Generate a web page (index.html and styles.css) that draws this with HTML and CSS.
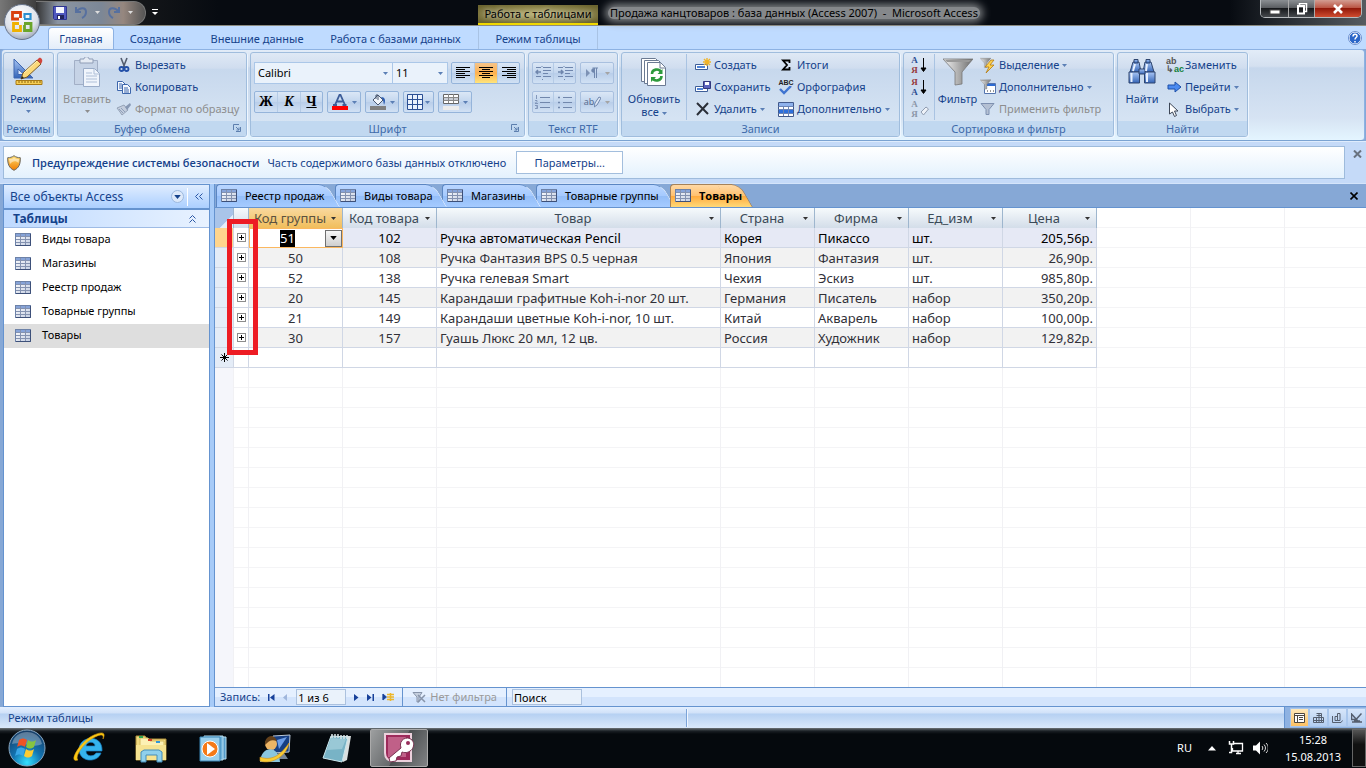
FILE: index.html
```html
<!DOCTYPE html>
<html lang="ru">
<head>
<meta charset="utf-8">
<title>Продажа канцтоваров : база данных (Access 2007) - Microsoft Access</title>
<link rel="stylesheet" href="styles.css">
</head>
<body>

<!-- shared icons -->
<svg class="defs" width="0" height="0">
  <defs>
    <linearGradient id="gBlue" x1="0" y1="0" x2="0" y2="1"><stop offset="0" stop-color="#a9c6f5"/><stop offset="1" stop-color="#3465b8"/></linearGradient>
    <linearGradient id="gGray" x1="0" y1="0" x2="1" y2="0"><stop offset="0" stop-color="#f4f4f4"/><stop offset="1" stop-color="#6c6c6c"/></linearGradient>
    <linearGradient id="gGold" x1="0" y1="0" x2="0" y2="1"><stop offset="0" stop-color="#ffe070"/><stop offset="1" stop-color="#ee7a00"/></linearGradient>
    <linearGradient id="gCells" x1="0" y1="0" x2="1" y2="1"><stop offset="0" stop-color="#fff"/><stop offset="1" stop-color="#c2cce0"/></linearGradient>
    <radialGradient id="gOrb" cx=".5" cy=".9" r=".9"><stop offset="0" stop-color="#35e0ff"/><stop offset=".45" stop-color="#1273b0"/><stop offset="1" stop-color="#173a63"/></radialGradient>
    <radialGradient id="gOffice" cx=".45" cy=".3" r=".8"><stop offset="0" stop-color="#fff"/><stop offset=".6" stop-color="#dde2ea"/><stop offset="1" stop-color="#8892a5"/></radialGradient>
  </defs>
  <symbol id="table" viewBox="0 0 16 13">
    <rect x=".5" y=".5" width="15" height="12" fill="url(#gCells)" stroke="#6d82a8"/>
    <rect x="1" y="1" width="14" height="2" fill="#86a3d8"/>
    <path d="M1 3.500h14M1 6.500h14M1 9.500h14M5.500 1v11M10.500 1v11" stroke="#8492b0"/>
    <path d="M15.500 1v11.500H1" fill="none" stroke="#3d5079"/>
  </symbol>
  <symbol id="caret" viewBox="0 0 5 3"><path d="M0 0h5L2.500 3z" fill="currentColor"/></symbol>
  <symbol id="plus" viewBox="0 0 9 9"><rect x=".5" y=".5" width="8" height="8" fill="#fff" stroke="#8c8c8c"/><path d="M2 4.500h5M4.500 2v5" stroke="#000"/></symbol>
  <symbol id="launch" viewBox="0 0 8 8"><path d="M.5 6V.5H6M7.500 3v4.500H3M3 3l3 3M6 3.500V6H3.500" fill="none" stroke="#5d7fae"/></symbol>
  <symbol id="funnel" viewBox="0 0 30 28"><path d="M0 1h30L19 14v12l-7 1V14z" fill="url(#gGray)" stroke="#777" stroke-width=".8"/><path d="M2 2h26l-2 2H4z" fill="#999"/></symbol>
</svg>

<header class="titlebar">
  <button class="office" aria-label="Office">
    <svg width="36" height="36" viewBox="0 0 36 36">
      <circle cx="18" cy="18" r="17.500" fill="url(#gOffice)" stroke="#66738a"/>
      <g fill="none" stroke-width="2.800">
        <path d="M15 15H8.500V8.500h8V14" stroke="#d9400f"/>
        <path d="M20 15h6.500v-5H20.500V14" stroke="#2b8fd0" stroke-width="2.200"/>
        <path d="M15 19.500H9.500v7h7V21" stroke="#efb100"/>
        <path d="M20 19.500h7v7h-6.500V21" stroke="#6aa52a"/>
      </g>
    </svg>
  </button>
  <div class="quick">
    <button aria-label="Сохранить файл"><svg width="14" height="14" viewBox="0 0 14 14"><path d="M.5.5h13v13h-12l-1-1z" fill="#5058c0" stroke="#2e3590"/><path d="M3 1h8v6H3z" fill="#f4f6ff"/><path d="M4 9h7v4H4z" fill="#23245c"/><path d="M5 10h2v3H5z" fill="#fff"/></svg></button>
    <button class="dim" aria-label="Отменить"><svg width="14" height="13" viewBox="0 0 14 13"><path d="M2 1v5h5M2.500 5.500C6 1 12 1 12 6c0 3-2 5-4 6" fill="none" stroke="#57709f" stroke-width="2"/></svg></button>
    <svg class="caret pale"><use href="#caret"/></svg>
    <button class="dim" aria-label="Вернуть"><svg width="14" height="13" viewBox="0 0 14 13"><path d="M12 1v5H7M11.500 5.500C8 1 2 1 2 6c0 3 2 5 4 6" fill="none" stroke="#57709f" stroke-width="2"/></svg></button>
    <svg class="caret pale"><use href="#caret"/></svg>
  </div>
  <svg class="more" width="6" height="7" viewBox="0 0 6 7"><path d="M0 .5h6" stroke="#fff"/><path d="M0 3h6L3 6z" fill="#fff"/></svg>
  <div class="context">Работа с таблицами</div>
  <h1>Продажа канцтоваров : база данных (Access 2007) &nbsp;- &nbsp;Microsoft Access</h1>
  <div class="winbtns">
    <button class="min" aria-label="Свернуть"><svg width="12" height="12"><rect x="1" y="7" width="10" height="4" fill="#fff" stroke="#444"/></svg></button>
    <button class="max" aria-label="Развернуть"><svg width="12" height="12" fill="none" stroke="#fff"><path d="M3.500 2V.5h7v8H9" stroke-width="1.500"/><rect x="2" y="3" width="6" height="7.500" stroke-width="2"/></svg></button>
    <button class="close" aria-label="Закрыть"><svg width="12" height="12"><path d="M2 2l8 8M10 2l-8 8" stroke="#fff" stroke-width="2.600"/></svg></button>
  </div>
</header>

<nav class="tabs">
  <a class="on" href="#">Главная</a>
  <a class="t2" href="#">Создание</a>
  <a class="t3" href="#">Внешние данные</a>
  <a class="t4" href="#">Работа с базами данных</a>
  <a class="t5" href="#">Режим таблицы</a>
  <button class="help" aria-label="Справка"><svg width="14" height="14" viewBox="0 0 14 14"><circle cx="7" cy="7" r="6" fill="#2b66c8" stroke="#fff"/><circle cx="7" cy="7" r="6.500" fill="none" stroke="#6b8fcf"/><path d="M5 5.500c0-3 4-3 4-.5C9 6.500 7 6.500 7 8.500M7 10v1.500" fill="none" stroke="#fff" stroke-width="1.500"/></svg></button>
</nav>

<section class="ribbon">
  <div class="group g-mode">
    <div class="body">
      <button class="big">
        <svg width="32" height="30" viewBox="0 0 32 30">
          <path d="M2 2v19h19z" fill="url(#gBlue)" stroke="#3e66b0"/><path d="M6 12v5.500h6z" fill="#dce8fa" stroke="#3e66b0"/>
          <path d="M4 23.500h26v4H4z" fill="#f7cf55" stroke="#a87a15"/><path d="M7 24v2M10 24v2M13 24v2M16 24v2M19 24v2M22 24v2M25 24v2M28 24v2" stroke="#8b6411"/>
          <path d="M9 22l2-6L25 3l4 4-14 13z" fill="#fbd979" stroke="#7b5b23"/><path d="M25 3l2-2c2-1 4 2 3 4l-1 2z" fill="#d2453c"/><path d="M12 16l13-12" stroke="#fff2c0"/><path d="M9 22l1-3 2 2z" fill="#222"/>
        </svg>
        <span>Режим</span><svg class="caret"><use href="#caret"/></svg>
      </button>
    </div>
    <div class="caption">Режимы</div>
  </div>

  <div class="group g-clip">
    <div class="body">
      <button class="big off" disabled>
        <svg width="28" height="30" viewBox="0 0 28 30">
          <path d="M1.500 3.500h23v24h-23z" fill="#c6d3e6" stroke="#a2afc6"/><path d="M7 2h4c0-3 5-3 5 0h4v4H7z" fill="#e5ebf4" stroke="#8f9db6"/>
          <path d="M10.500 11.500h11l5 5v13h-16z" fill="#f0f5fc" stroke="#9aacc8"/><path d="M21 12v5h5M13 16h6M13 19h11M13 22h11M13 25h11" stroke="#aebfd8" fill="none"/>
        </svg>
        <span>Вставить</span><svg class="caret"><use href="#caret"/></svg>
      </button>
      <div class="col">
        <button><svg width="16" height="16" viewBox="0 0 16 16"><path d="M5 1l4 10M11 1L7 11" stroke="#555e70" stroke-width="1.600"/><circle cx="5.500" cy="12" r="2" fill="none" stroke="#2350a8" stroke-width="1.800"/><circle cx="10.500" cy="12" r="2" fill="none" stroke="#2350a8" stroke-width="1.800"/></svg>Вырезать</button>
        <button><svg width="16" height="16" viewBox="0 0 16 16"><g fill="#f5f9ff" stroke="#3c66ac"><path d="M1.500 2.500h5l3 3v6h-8z"/><path d="M6.500 5.500h5l3 3v6h-8z"/></g><path d="M3 5h3M3 7h3M3 9h3M8 9h4M8 11h5M8 13h5" stroke="#3c66ac"/></svg>Копировать</button>
        <button class="off" disabled><svg width="16" height="16" viewBox="0 0 16 16"><path d="M1 7l7-3 4 5-6 5-2-3z" fill="#c3cddd" stroke="#95a3b8"/><path d="M9 6l5-4 1 2-4 5z" fill="#8798b4"/><path d="M3 8l4 4M5 7l4 4" stroke="#8fa0ba"/></svg>Формат по образцу</button>
      </div>
    </div>
    <div class="caption">Буфер обмена<svg class="launch"><use href="#launch"/></svg></div>
  </div>

  <div class="group g-font">
    <div class="body rows">
      <div class="line">
        <div class="combos">
          <select class="fname" aria-label="Шрифт"><option>Calibri</option></select><select class="fsize" aria-label="Размер"><option>11</option></select>
        </div>
        <div class="set wide">
          <button aria-label="По левому краю"><svg width="16" height="12" stroke="#000"><path d="M1 .5h14M1 2.500h9M1 4.500h14M1 6.500h9M1 8.500h14M1 10.500h9"/></svg></button>
          <button class="hot" aria-label="По центру"><svg width="16" height="12" stroke="#000"><path d="M1 .5h14M4 2.500h8M1 4.500h14M4 6.500h8M1 8.500h14M4 10.500h8"/></svg></button>
          <button aria-label="По правому краю"><svg width="16" height="12" stroke="#000"><path d="M1 .5h14M6 2.500h9M1 4.500h14M6 6.500h9M1 8.500h14M6 10.500h9"/></svg></button>
        </div>
      </div>
      <div class="line">
        <div class="set wide letters"><button><b>Ж</b></button><button><i>К</i></button><button><u>Ч</u></button></div>
        <div class="set drop"><button aria-label="Цвет шрифта"><svg width="16" height="16" viewBox="0 0 16 16"><path d="M3 11L7.500 1h1L13 11M5 7.500h6M1 11h4M10.500 11h4" fill="none" stroke="#3c5c98" stroke-width="1.800"/><path d="M0 12h16v4H0z" fill="#f00"/></svg><svg class="caret"><use href="#caret"/></svg></button></div>
        <div class="set drop"><button aria-label="Заливка"><svg width="16" height="16" viewBox="0 0 16 16"><path d="M3 6l5-5 5 5-5 5z" fill="#f2f6fc" stroke="#49566f"/><path d="M6 5V1h2v5" fill="none" stroke="#49566f"/><path d="M11 3c4 0 5 3 3 8l-1-5z" fill="#2d5db0"/><path d="M0 12h16v4H0z" fill="#808080"/></svg><svg class="caret"><use href="#caret"/></svg></button></div>
        <div class="set drop narrow"><button aria-label="Сетка"><svg width="16" height="16" fill="#eaf2fd" stroke="#2b4f94"><path d="M.5.5h15v15H.5zM5.500 0v16M10.500 0v16M0 5.500h16M0 10.500h16"/></svg><svg class="caret"><use href="#caret"/></svg></button></div>
        <div class="set drop"><button aria-label="Чередование строк"><svg width="16" height="16"><path d="M.5.500h15v9H.5z" fill="#fff" stroke="#666"/><path d="M1 3h14v3H1z" fill="#c8ccd4"/><path d="M.5 3.500h15M.5 6.500h15M5.500 0v9M10.500 0v9" stroke="#888"/><path d="M0 12h16v4H0z" fill="#ececec"/></svg><svg class="caret"><use href="#caret"/></svg></button></div>
      </div>
    </div>
    <div class="caption">Шрифт<svg class="launch"><use href="#launch"/></svg></div>
  </div>

  <div class="group g-rtf">
    <div class="body rows">
      <div class="line">
        <div class="set gray"><button disabled aria-label="Уменьшить отступ"><svg width="16" height="14" stroke="#6f86ad"><path d="M1 1.500h5M8 1.500h8M8 4.500h8M8 7.500h5M1 10.500h5M8 10.500h8M7 13.500h1M7 0v1"/><path d="M1 6h5M3 4L1 6l2 2" fill="none" stroke-width="1.500"/></svg></button><button disabled aria-label="Увеличить отступ"><svg width="16" height="14" stroke="#6f86ad"><path d="M1 1.500h5M8 1.500h8M8 4.500h8M8 7.500h5M1 10.500h5M8 10.500h8M7 13.500h1M7 0v1"/><path d="M1 6h5M4 4l2 2-2 2" fill="none" stroke-width="1.500"/></svg></button></div>
        <div class="set drop gray"><button disabled aria-label="Направление текста"><svg width="16" height="12"><path d="M1 2l4 4-4 4z" fill="#7d92b5"/><path d="M9.500 1v10M11.500 1v10M7.500 1H13" stroke="#6f86ad"/><path d="M10 1C5 1 5 6 10 6z" fill="#6f86ad"/></svg><svg class="caret"><use href="#caret"/></svg></button></div>
      </div>
      <div class="line">
        <div class="set gray"><button disabled aria-label="Нумерация"><svg width="16" height="15" stroke="#7187ac"><path d="M5 2.500h10M5 7.500h10M5 12.500h10"/><path d="M1.500 0v4M0 5.500h2v1L0 8.500h3M0 10.500h2.500v3H0M1 12h1" fill="none" stroke-width=".8"/></svg></button><button disabled aria-label="Маркеры"><svg width="16" height="15" stroke="#7187ac"><path d="M6 2.500h9M6 7.500h9M6 12.500h9M1 2.500h2M1 7.500h2M1 12.500h2"/><path d="M2 1.500v2M2 6.500v2M2 11.500v2"/></svg></button></div>
        <div class="set drop gray"><button disabled aria-label="Выделение цветом"><span class="ab">ab</span><svg width="7" height="12" viewBox="0 0 7 12"><path d="M0 11l1-4 4-6 2 1-4 7z" fill="#dfe8f5" stroke="#6f86ad"/></svg><svg class="caret"><use href="#caret"/></svg></button></div>
      </div>
    </div>
    <div class="caption">Текст RTF</div>
  </div>

  <div class="group g-rec">
    <div class="body">
      <button class="big sep">
        <svg width="26" height="30" viewBox="0 0 26 30"><g fill="#fff" stroke="#6b7a92"><path d="M.5 1.500h14l3 3v20H.5z"/><path d="M3.500 3.500h14l3 3v20h-17z"/><path d="M6.500 5.500h13l5 5v18h-18z"/></g><path d="M19 6v5h5" fill="none" stroke="#6b7a92"/><path d="M11 17c0-5 7-6 9-2M20.500 19c0 5-7 6-9 2" fill="none" stroke="#2d9a3c" stroke-width="2.600"/><path d="M21.500 12v5h-5zM10 25v-5h5z" fill="#2d9a3c"/></svg>
        <span>Обновить<br>все <svg class="caret"><use href="#caret"/></svg></span>
      </button>
      <div class="col">
        <button><svg width="16" height="14" viewBox="0 0 16 14"><path d="M.5 6.500h12v5H.5z" fill="#fff" stroke="#3e5e98"/><path d="M2 8h8v2H2z" fill="#4f83d8"/><path d="M12 0v8M8 4h8M9 1l6 6M15 1L9 7" stroke="#f1b429" stroke-width="1.400"/></svg>Создать</button>
        <button><svg width="16" height="14" viewBox="0 0 16 14"><path d="M.5 6.500h12v5H.5z" fill="#fff" stroke="#3e5e98"/><path d="M2 8h6v2H2z" fill="#4f83d8"/><path d="M8.500 1.500h7v7h-7z" fill="#5b63bd" stroke="#31377d"/><path d="M10 2h4v3h-4z" fill="#fff"/></svg>Сохранить</button>
        <button><svg width="16" height="14" viewBox="0 0 16 14"><path d="M2 1l11 11M13 1L2 13" stroke="#2b2f38" stroke-width="2"/></svg>Удалить<svg class="caret"><use href="#caret"/></svg></button>
      </div>
      <div class="col col2">
        <button><svg width="16" height="14" viewBox="0 0 16 14"><path d="M11.500 5V2.500H5L9 7l-4 4.500h6.500V9" fill="none" stroke="#000" stroke-width="1.800"/></svg>Итоги</button>
        <button><span class="abc">ABC<svg width="14" height="9" viewBox="0 0 14 9"><path d="M2 3l4 4 7-7" fill="none" stroke="#3f74d0" stroke-width="2.400"/></svg></span>Орфография</button>
        <button><svg width="16" height="15" viewBox="0 0 16 15"><path d="M.5.500h15v14H.5z" fill="#fff" stroke="#41598c"/><path d="M1 1h14v3H1z" fill="#8fb2ec"/><path d="M1 7h14v4H1z" fill="#2c6fdd"/><path d="M.5 4.500h15M.5 7.500h15M.5 11.500h15M5.500 4v10M10.500 4v10" stroke="#6b84b5"/></svg>Дополнительно<svg class="caret"><use href="#caret"/></svg></button>
      </div>
    </div>
    <div class="caption">Записи</div>
  </div>

  <div class="group g-sort">
    <div class="body">
      <div class="col sorts">
        <button aria-label="По возрастанию"><span class="az"><b>А</b><em>Я</em></span><svg width="7" height="16"><path d="M3.500 1v13M1 11l2.500 3.500L6 11z" stroke="#000"/></svg></button>
        <button aria-label="По убыванию"><span class="az"><em>Я</em><b>А</b></span><svg width="7" height="16"><path d="M3.500 1v13M1 11l2.500 3.500L6 11z" stroke="#000"/></svg></button>
        <button class="off" disabled aria-label="Очистить сортировку"><span class="az"><b>А</b><em>Я</em></span><svg width="9" height="16"><path d="M1 11l5-5 2.500 2-5 6z" fill="#eef2f8" stroke="#909cb0"/></svg></button>
      </div>
      <button class="big">
        <svg width="30" height="30" viewBox="0 -1 30 30"><use href="#funnel" width="30" height="28"/></svg>
        <span>Фильтр</span>
      </button>
      <div class="col">
        <button><svg width="16" height="16" viewBox="0 0 16 16"><use href="#funnel" width="11" height="12"/><path d="M11 3L5 10h4l-3 6 8-8h-4l4-5z" fill="#ffd34d" stroke="#b27812" stroke-width=".8"/></svg>Выделение<svg class="caret"><use href="#caret"/></svg></button>
        <button><svg width="16" height="16" viewBox="0 0 16 16"><path d="M4.500 4.500h11v10h-11z" fill="#fff" stroke="#5474ae"/><path d="M5 5h10v2H5z" fill="#2d6bd2"/><use href="#funnel" width="11" height="11"/><path d="M7 12h1M10 12h1M13 12h1" stroke="#333"/></svg>Дополнительно<svg class="caret"><use href="#caret"/></svg></button>
        <button class="off" disabled><svg width="16" height="14" viewBox="0 0 16 14"><path d="M1 1.500h13L9 7.500v5H6v-5z" fill="#b4c0d3" stroke="#7e90b0"/></svg>Применить фильтр</button>
      </div>
    </div>
    <div class="caption">Сортировка и фильтр</div>
  </div>

  <div class="group g-find">
    <div class="body">
      <button class="big">
        <svg width="28" height="30" viewBox="0 -1 28 30"><g fill="url(#gBlue)" stroke="#2e456f"><path d="M5 4h6l2 10H2zM17 4h6l3 10H15z"/><path d="M6 1.500h4V5H6zM18 1.500h4V5h-4z"/><path d="M1 14h10.500v11H1zM16.500 14H27v11H16.500z"/><path d="M11 11h6v5h-6z"/></g><path d="M3.500 15v9M19 15v9M7 6l-2 7M19 6l-1 7" stroke="#e8f1ff" stroke-width="2"/></svg>
        <span>Найти</span>
      </button>
      <div class="col">
        <button><span class="repl">ab<br>↳<b>ac</b></span>Заменить</button>
        <button><svg width="16" height="12" viewBox="0 0 16 12"><path d="M2 4h7V1l6 5-6 5V8H2z" fill="#4a8af0" stroke="#1d4fa8"/></svg>Перейти<svg class="caret"><use href="#caret"/></svg></button>
        <button><svg width="16" height="15" viewBox="0 0 16 15"><path d="M3.500 1v11l3-2 2 4.500 2-1-2-4.500h3.500z" fill="#fff" stroke="#3c4656"/></svg>Выбрать<svg class="caret"><use href="#caret"/></svg></button>
      </div>
    </div>
    <div class="caption">Найти</div>
  </div>
</section>

<section class="message">
  <div class="msgbox">
    <svg width="14" height="16" viewBox="0 0 14 16"><path d="M7 .7c2 1.500 4 2 6.300 2C13.500 9 12 13 7 15.300 2 13 .5 9 .7 2.700 3 2.700 5 2.200 7 .7z" fill="url(#gGold)" stroke="#6e6a62"/><path d="M2 4c2 0 4-.5 5-1.500C8 3.500 10 4 12 4l-.5 4C9 5 5 6 3 9z" fill="#fff" opacity=".5"/></svg>
    <b>Предупреждение системы безопасности</b>
    <span>Часть содержимого базы данных отключено</span>
    <button>Параметры...</button>
  </div>
  <button class="x" aria-label="Закрыть панель"><svg width="9" height="8"><path d="M1 .500l7 7M8 .500l-7 7" stroke="#69727f" stroke-width="2"/></svg></button>
</section>

<main class="work">
  <aside class="objects">
    <div class="objhead"><span>Все объекты Access</span><button class="round" aria-label="Меню"><svg width="7" height="4" viewBox="0 0 5 3"><use href="#caret"/></svg></button><button class="fold" aria-label="Скрыть"><svg width="8" height="7" fill="none" stroke="#2b57a5"><path d="M3.500.5l-3 3 3 3M7.500.5l-3 3 3 3"/></svg></button></div>
    <div class="objgroup"><span>Таблицы</span><svg width="7" height="8" fill="none" stroke="#2b57a5"><path d="M.5 3.500l3-3 3 3M.5 7.500l3-3 3 3"/></svg></div>
    <ul>
      <li><a href="#"><svg class="tbl"><use href="#table"/></svg>Виды товара</a></li>
      <li><a href="#"><svg class="tbl"><use href="#table"/></svg>Магазины</a></li>
      <li><a href="#"><svg class="tbl"><use href="#table"/></svg>Реестр продаж</a></li>
      <li><a href="#"><svg class="tbl"><use href="#table"/></svg>Товарные группы</a></li>
      <li class="sel"><a href="#"><svg class="tbl"><use href="#table"/></svg>Товары</a></li>
    </ul>
  </aside>

  <section class="doc">
    <nav class="doctabs">
      <a class="d1" href="#"><svg class="tbl"><use href="#table"/></svg>Реестр продаж</a>
      <a class="d2" href="#"><svg class="tbl"><use href="#table"/></svg>Виды товара</a>
      <a class="d3" href="#"><svg class="tbl"><use href="#table"/></svg>Магазины</a>
      <a class="d4" href="#"><svg class="tbl"><use href="#table"/></svg>Товарные группы</a>
      <a class="d5 on" href="#"><svg class="tbl"><use href="#table"/></svg>Товары</a>
      <button class="x" aria-label="Закрыть таблицу"><svg width="8" height="8"><path d="M.500.500l7 7M7.500.500l-7 7" stroke="#000" stroke-width="1.600"/></svg></button>
    </nav>
    <div class="sheet">
      <table>
        <colgroup><col class="c-sel"><col class="c-exp"><col class="c-n"><col class="c-n"><col class="c-name"><col class="c-n"><col class="c-n"><col class="c-n"><col class="c-n"></colgroup>
        <thead>
          <tr>
            <th class="corner"></th><th></th>
            <th class="cur"><div>Код группы<svg class="caret"><use href="#caret"/></svg></div></th>
            <th><div>Код товара<svg class="caret"><use href="#caret"/></svg></div></th>
            <th><div>Товар<svg class="caret"><use href="#caret"/></svg></div></th>
            <th><div>Страна<svg class="caret"><use href="#caret"/></svg></div></th>
            <th><div>Фирма<svg class="caret"><use href="#caret"/></svg></div></th>
            <th><div>Ед_изм<svg class="caret"><use href="#caret"/></svg></div></th>
            <th><div>Цена<svg class="caret"><use href="#caret"/></svg></div></th>
          </tr>
        </thead>
        <tbody>
          <tr class="active"><td class="rs"></td><td class="ex"><svg class="plus"><use href="#plus"/></svg></td><td class="edit"><div><input value="51" aria-label="Код группы"><button aria-label="Список"><svg width="7" height="4" viewBox="0 0 5 3"><use href="#caret"/></svg></button></div></td><td class="mid">102</td><td>Ручка автоматическая Pencil</td><td>Корея</td><td>Пикассо</td><td>шт.</td><td class="num">205,56р.</td></tr>
          <tr><td class="rs"></td><td class="ex"><svg class="plus"><use href="#plus"/></svg></td><td class="mid">50</td><td class="mid">108</td><td>Ручка Фантазия BPS 0.5 черная</td><td>Япония</td><td>Фантазия</td><td>шт.</td><td class="num">26,90р.</td></tr>
          <tr><td class="rs"></td><td class="ex"><svg class="plus"><use href="#plus"/></svg></td><td class="mid">52</td><td class="mid">138</td><td>Ручка гелевая Smart</td><td>Чехия</td><td>Эскиз</td><td>шт.</td><td class="num">985,80р.</td></tr>
          <tr><td class="rs"></td><td class="ex"><svg class="plus"><use href="#plus"/></svg></td><td class="mid">20</td><td class="mid">145</td><td>Карандаши графитные Koh-i-nor 20 шт.</td><td>Германия</td><td>Писатель</td><td>набор</td><td class="num">350,20р.</td></tr>
          <tr><td class="rs"></td><td class="ex"><svg class="plus"><use href="#plus"/></svg></td><td class="mid">21</td><td class="mid">149</td><td>Карандаши цветные Koh-i-nor, 10 шт.</td><td>Китай</td><td>Акварель</td><td>набор</td><td class="num">100,00р.</td></tr>
          <tr><td class="rs"></td><td class="ex"><svg class="plus"><use href="#plus"/></svg></td><td class="mid">30</td><td class="mid">157</td><td>Гуашь Люкс 20 мл, 12 цв.</td><td>Россия</td><td>Художник</td><td>набор</td><td class="num">129,82р.</td></tr>
          <tr class="new"><td class="rs"><svg width="9" height="9" viewBox="0 0 9 9" stroke="#000"><path d="M4.500 0v9M0 4.500h9M1.500 1.500l6 6M7.500 1.500l-6 6"/></svg></td><td></td><td></td><td></td><td></td><td></td><td></td><td></td><td></td></tr>
        </tbody>
      </table>
      <div class="frame"></div>
    </div>
    <div class="recnav">
      <label for="rec">Запись:</label>
      <button aria-label="Первая"><svg width="7" height="7"><path d="M0 0h1.500v7H0zM6.500 0v7L2 3.500z" fill="#17409a"/></svg></button>
      <button aria-label="Предыдущая"><svg width="5" height="7"><path d="M4 0v7L0 3.500z" fill="#9fb6dc"/></svg></button>
      <input id="rec" class="recno" value="1 из 6">
      <button aria-label="Следующая"><svg width="5" height="7"><path d="M0 0v7l4.500-3.500z" fill="#17409a"/></svg></button>
      <button aria-label="Последняя"><svg width="7" height="7"><path d="M5.500 0H7v7H5.500zM0 0v7l4.500-3.500z" fill="#17409a"/></svg></button>
      <button aria-label="Новая запись"><svg width="12" height="8"><path d="M0 1v6M1 1v6l3.500-3z" fill="#17409a" stroke="#17409a" stroke-width=".8"/><path d="M8.500 0v8M5 1.500h7M5 4h7M5 6.500h7" stroke="#edb72c" stroke-width="1.500"/></svg></button>
      <div class="nofilter"><svg width="14" height="12"><path d="M1 1.500h9L7 6v5H5V6z" fill="#c5cfde" stroke="#8794aa"/><path d="M6 4l7 7M13 4l-7 7" stroke="#8794aa" stroke-width="1.500"/></svg>Нет фильтра</div>
      <input class="find" value="Поиск" aria-label="Поиск">
    </div>
  </section>
</main>

<footer class="status">
  <span class="mode">Режим таблицы</span>
  <span class="pane"></span>
  <div class="views">
    <button class="on" aria-label="Таблица"><svg width="11" height="10" fill="#fff" stroke="#4c463e"><path d="M.5.500h10v9H.5zM0 2.500h11M3.500 2v8M5 4.500h4M5 6.500h4"/></svg></button>
    <button aria-label="Сводная таблица"><svg width="11" height="10" fill="none" stroke="#555e6e"><path d="M3.500.500h5v9h-8v-5h10v5h-2M0 7.500h11M3.500 2.500h5M6 0v9M3.500 4v6"/></svg></button>
    <button aria-label="Сводная диаграмма"><svg width="11" height="10" fill="none" stroke="#555e6e"><path d="M.500 3v6.500H9l1.500-2M3 7.500v-4h2.500v4zM5.500 7.500v-7H8v7z"/></svg></button>
    <button aria-label="Конструктор"><svg width="11" height="10" fill="none" stroke="#555e6e"><path d="M.500 1v5.500h5zM1 9h10M10.500.500L5 6.500M3 8h6" stroke-width="1.500"/></svg></button>
  </div>
</footer>

<footer class="taskbar">
  <button class="start" aria-label="Пуск"><svg width="38" height="38" viewBox="0 0 38 38"><circle cx="19" cy="19" r="18" fill="url(#gOrb)" stroke="#89a7c0"/><path d="M4 15C7-1 31-1 34 15 25 20 14 12 4 15z" fill="#fff" opacity=".3"/><path d="M11 11c3-2 5-2 8 0l-2 7c-3-2-5-2-8 0z" fill="#ee5426"/><path d="M20 11c3 2 5 2 8 0l-2 7c-3 2-5 2-8 0z" fill="#86c440"/><path d="M9 20c3-2 5-2 8 0l-2 7c-3-2-5-2-8 0z" fill="#39a6e6"/><path d="M18 20c3 2 5 2 8 0l-2 7c-3 2-5 2-8 0z" fill="#fbcc32"/></svg></button>
  <a href="#" aria-label="Internet Explorer"><svg width="34" height="34" viewBox="0 0 34 34"><path d="M24 22c-2 4-10 4-10-2h16C31 3 8 4 7 18c0 14 19 14 22 4zM14 15c1-5 9-5 9 0z" fill="#35b4ee" fill-rule="evenodd" stroke="#1780c4" stroke-width=".7"/><path d="M6 29C-5 33 8 10 22 4c9-4 12-2 9 4 1-5-2-5-8-2C12 11 2 26 6 29z" fill="#fac914" stroke="#dc9a0c" stroke-width=".6"/></svg></a>
  <a href="#" aria-label="Проводник"><svg width="34" height="34" viewBox="0 0 34 34"><path d="M2 5h9l2 3h19v21H2z" fill="#f1da80" stroke="#ae8f3b"/><path d="M6 7h8l2 3h14v9H6z" fill="#fcf1b4" stroke="#d6bb5c"/><path d="M5 5h4v2H5z" fill="#30a552"/><path d="M14 8h4v2h-4z" fill="#d63f2a"/><path d="M22 10h4v2h-4z" fill="#3297d8"/><path d="M2 14h30v15H2z" fill="#f6e391"/><path d="M7 31V21l3-2h15l3 2v10h-5v-7H12v7z" fill="#8fd0ec" stroke="#448db8"/></svg></a>
  <a href="#" aria-label="Проигрыватель"><svg width="34" height="34" viewBox="0 0 34 34"><path d="M11 6h19v22H11z" fill="#559bc9" stroke="#b8deef"/><path d="M8 5h19v24H8z" fill="#70b2da" stroke="#b8deef"/><path d="M4 6h20v24H4z" fill="#9bd0ed" stroke="#3985b5"/><circle cx="14" cy="18" r="8" fill="#f57a18" stroke="#fff"/><path d="M11 12l8 6-8 6z" fill="#fff"/></svg></a>
  <a href="#" aria-label="Windows Live"><svg width="34" height="34" viewBox="0 0 34 34"><path d="M15 5l17-1-1 17-16 1z" fill="#173f83" stroke="#bcc9d9"/><path d="M19 9l10-3-8 12z" fill="#6c9ee8"/><path d="M20 22h6l4 6H17z" fill="#778696"/><circle cx="13" cy="13" r="6" fill="#edb565"/><path d="M7 14c-1-9 9-13 12-4-6-2-8 0-12 4z" fill="#63401b"/><path d="M2 31c1-17 19-17 20 0z" fill="#8ac6df"/><path d="M2 26c13 5 22-4 29-14-2 12-16 22-29 18z" fill="#f9cc35" stroke="#d38f13" stroke-width=".6"/></svg></a>
  <a href="#" aria-label="Блокнот"><svg width="34" height="34" viewBox="0 0 34 34"><path d="M16 5h15l-4 24-4 2z" fill="#d9dfdf"/><path d="M11 5l17 1-6 25-19-4z" fill="#78b3c6" stroke="#cbe7ed"/><path d="M11 7l15 1-4 10L7 19z" fill="#b9dde6" opacity=".5"/><path d="M12 3v4M15 3v4M18 3v4M21 4v4M24 4v4M27 4v4" stroke="#dae5e8" stroke-width="1.500"/></svg></a>
  <a class="running" href="#" aria-label="Access"><svg width="32" height="32" viewBox="0 0 32 32"><path d="M2 2h26v27H11C5 29 2 26 2 21V9z" fill="#9d2a5b" stroke="#ecd0dc" stroke-width="2"/><path d="M5 5h18v20H5z" fill="#c06088"/><path d="M29 8c-5-5-14 0-11 8L6 26l1 4 6-1 1-4 4-1 1-4c8 3 15-6 10-12z" fill="#fff" stroke="#78304f"/><circle cx="25" cy="11" r="2" fill="#982d5b"/></svg></a>
  <div class="tray">
    <span class="lang">RU</span>
    <svg class="up" width="8" height="5"><path d="M0 4.500h8L4 0z" fill="#fff"/></svg>
    <svg class="net" width="16" height="16" viewBox="0 0 16 16" fill="none" stroke="#fff"><path d="M5 3.500h9.500v7.500H4.500V8M8 13.500h5M10 11v3" stroke-width="1.300"/><path d="M1.500 1v3h4V1M3.500 4v8.500H1" stroke-width="1.500"/></svg>
    <svg class="vol" width="16" height="14" viewBox="0 0 16 14"><path d="M1 4.500h3l4-4v13l-4-4H1z" fill="#fff"/><path d="M10 5c1 1 1 3 0 4M12 3.500c2 2 2 5 0 7M14 2c3 3 3 7 0 10" fill="none" stroke="#ddd"/></svg>
    <div class="clock">15:28<br>15.08.2013</div>
    <button class="desk" aria-label="Свернуть все окна"></button>
  </div>
</footer>

</body>
</html>
```
FILE: styles.css
```css
* { box-sizing: border-box; }
body { margin: 0; height: 100vh; display: flex; flex-direction: column; overflow: hidden; background: #86a8d6; font: 11px/14px "Noto Sans", "Open Sans", sans-serif; color: #15428b; }
button { font: inherit; color: inherit; background: none; border: 0; padding: 0; margin: 0; display: flex; align-items: center; justify-content: center; }
a { color: inherit; text-decoration: none; }
svg { flex: none; display: block; }
.defs { position: absolute; }
.caret { width: 5px; height: 3px; color: #5b7fb5; }
.tbl { width: 16px; height: 13px; }

/* title bar */
.titlebar { position: relative; height: 26px; flex: none; display: flex; align-items: center; background: linear-gradient(90deg, #777 0, #222 4%, #070b11 16%, #070b11 90%, #555b60); border-bottom: 1px solid #8b8b80; color: #000; }
.office { position: absolute; left: 4px; top: 4px; z-index: 3; border-radius: 50%; }
.quick { display: flex; align-items: center; gap: 7px; height: 24px; margin-left: 36px; padding: 0 12px 0 17px; border: 1px solid #777; border-left: 0; border-radius: 0 12px 12px 0; background: linear-gradient(90deg, #333 0, #8b95a3 20%, #7c8796 60%, #96877f 80%, #555); }
.quick .pale { color: #ddd; }
.more { margin-left: 6px; }
.context { margin-left: 320px; width: 120px; height: 20px; align-self: flex-end; text-align: center; line-height: 18px; white-space: nowrap; background: radial-gradient(ellipse, #b9b172, #6c6530 90%); border-bottom: 2px solid #f0d800; text-shadow: 0 0 5px #ddd; }
.titlebar h1 { margin: 0 0 0 10px; padding: 0 2px; font-size: 11px; line-height: 12px; font-weight: normal; white-space: nowrap; background: #85888b; box-shadow: 0 0 8px 3px #85888b; border-radius: 6px; }
.winbtns { display: flex; align-self: flex-start; height: 18px; margin: 0 4px 0 auto; border: 1px solid #b6babd; border-top: 0; border-radius: 0 0 5px 5px; overflow: hidden; }
.winbtns button { width: 28px; border-right: 1px solid #aaa; background: linear-gradient(#8b8f93, #5b5e62 45%, #17191c 50%, #45494d); }
.winbtns .max { width: 26px; }
.winbtns .close { width: 46px; border: 0; background: linear-gradient(#d39d92, #bb5645 45%, #92190a 50%, #cf4c2f); }

/* ribbon tabs */
.tabs { height: 23px; flex: none; display: flex; align-items: flex-end; padding-left: 48px; background: #bfdbff; }
.tabs a { height: 22px; line-height: 23px; text-align: center; white-space: nowrap; }
.tabs .on { width: 66px; background: linear-gradient(#fff, #e3edf9); border: 1px solid #8db2e3; border-bottom: 0; border-radius: 4px 4px 0 0; line-height: 22px; }
.t2 { width: 83px; }
.t3 { width: 120px; }
.t4 { width: 157px; }
.tabs .t5 { width: 120px; margin-left: 4px; border: solid #a9c3e4; border-width: 0 1px; }
.help { align-self: center; margin: 0 4px 0 auto; }

/* ribbon */
.ribbon { height: 92px; flex: none; display: flex; gap: 3px; margin: 0 1px; padding: 2px 2px 3px 1px; border: 1px solid #8db2e3; border-radius: 4px; background: linear-gradient(#e2ecf8, #d4e0f0 18%, #c6d7ec 20%, #d6e3f3 75%, #e4f5ff); border-bottom-color: #7ba3d2; }
.group { display: flex; flex-direction: column; border: 1px solid #a0bddd; border-radius: 3px; background: linear-gradient(#dfe9f5, #d0ddef 18%, #c7d8ed 20%, #dae7f5); box-shadow: 1px 1px #eef6ff; overflow: hidden; }
.g-mode { width: 51px; }
.g-clip { width: 190px; }
.g-font { width: 275px; }
.g-rtf { width: 90px; }
.g-rec { width: 279px; }
.g-sort { width: 211px; }
.g-find { width: 131px; }
.body { flex: 1; display: flex; padding: 1px 0; min-height: 0; }
.caption { position: relative; height: 15px; line-height: 15px; text-align: center; background: #c1d8f0; color: #3e6aaa; white-space: nowrap; }
.launch { position: absolute; right: 5px; top: 3px; width: 8px; height: 8px; }
.big { flex-direction: column; justify-content: flex-start; padding-top: 3px; width: 48px; line-height: 13px; white-space: nowrap; }
.big > svg:first-child { margin-bottom: 5px; }
.big > .caret { margin-top: 5px; }
.big span .caret { display: inline-block; vertical-align: middle; }
.g-clip .big { width: 58px; }
.g-rec .big { width: 65px; }
.g-sort .big { width: 46px; border-left: 1px solid #a9c3e2; }
.sep { border-right: 1px solid #a9c3e2; }
.col { display: flex; flex-direction: column; }
.col button { flex: none; height: 22px; gap: 3px; justify-content: flex-start; white-space: nowrap; }
.g-rec .col { padding-left: 8px; width: 91px; }
.g-rec .col2 { padding-left: 0; }
.sorts { width: 30px; padding-left: 6px; }
.g-sort .col.sorts button { gap: 1px; }
.off, .off .caret { color: #8d8d8d; }
.rows { flex-direction: column; gap: 7px; padding: 9px 0 0 3px; }
.line { display: flex; gap: 4px; height: 22px; }
.combos { display: flex; width: 194px; margin-right: -1px; }
.combos select { appearance: none; font: inherit; color: #000; height: 22px; padding: 0 3px; border: 1px solid #abc7e8; border-radius: 0; background: url("data:image/svg+xml,%3Csvg xmlns='http://www.w3.org/2000/svg' width='5' height='3'%3E%3Cpath d='M0 0h5L2.500 3z' fill='%235b7fb5'/%3E%3C/svg%3E") no-repeat right 4px center #eaf2fb; }
.fname { width: 139px; }
.combos .fsize { width: 55px; border-left: 0; }
.set { display: flex; border: 1px solid #95b4da; border-radius: 2px; background: linear-gradient(#dbe7f6, #c3d6ee 48%, #b8cde9 50%, #d1e1f4); }
.set button { width: 22px; gap: 4px; border-right: 1px solid #b5cbe6; }
.set button:last-child { border-right: 0; }
.wide button { width: 23px; }
.wide button:last-child { width: 21px; }
.set .hot { background: linear-gradient(#f5c48a, #fdb04f 50%, #ffe57c); }
.letters { font: bold 14px/16px "Liberation Serif", serif; color: #000; }
.drop button { width: 32px; }
.narrow button { width: 29px; gap: 2px; }
.gray { border-color: #a9c0df; }
.gray button { width: 21px; }
.gray.drop button { width: 32px; }
.gray .caret { color: #a4a4a4; }
.ab { font-size: 9px; line-height: 12px; color: #596e92; }
.gray .ab { margin-right: -4px; }
.abc { width: 16px; font: bold 7px/6px "Liberation Sans", sans-serif; color: #222; }
.az { display: flex; flex-direction: column; width: 9px; font: bold 9px/10px "Liberation Serif", serif; color: #2b4c91; }
.az em { font-style: normal; color: #97393c; }
.off .az, .off .az em { color: #8b96a8; }
.repl { width: 16px; font: bold 9px/8px "Liberation Sans", sans-serif; color: #555; text-align: left; white-space: nowrap; }
.repl b { color: #13803a; }

/* security message */
.message { height: 43px; flex: none; display: flex; align-items: flex-start; padding: 4px 4px 4px 3px; background: #c5daf8; border-top: 1px solid #dfecfd; border-bottom: 1px solid #d4e4fa; }
.msgbox { flex: 1; height: 33px; display: flex; align-items: center; padding-left: 3px; border: 1px solid #9ebbdc; background: linear-gradient(#fff, #e3f1fd); }
.msgbox b { margin-left: 11px; font-family: "Open Sans", sans-serif; font-weight: 600; }
.msgbox span { margin-left: 8px; }
.msgbox button { margin-left: 10px; width: 107px; height: 23px; background: #fff; border: 1px solid #a3bedd; }
.message .x { margin: 4px 0 0 8px; width: 9px; height: 8px; }

/* workspace */
.work { flex: 1; min-height: 0; display: flex; gap: 4px; padding-left: 3px; background: linear-gradient(90deg, #86a8d6 3px, #a7cbf8 3px, #a7cbf8 214px, #86a8d6 214px); }
.objects { width: 207px; border: 1px solid #6593cf; background: #fff; }
.objhead { display: flex; align-items: center; height: 25px; padding: 0 6px; font-size: 12px; background: linear-gradient(#e0edff, #abcfff); border-bottom: 2px solid #6593cf; white-space: nowrap; }
.round { width: 13px; height: 13px; margin-left: auto; border-radius: 50%; background: #dde9fa; border: 1px solid #9db9dd; }
.fold { height: 18px; padding-left: 7px; margin-left: 3px; border-left: 1px solid #fff; }
.objgroup { display: flex; justify-content: space-between; align-items: center; height: 18px; padding: 0 13px 0 9px; font-weight: bold; font-size: 12px; background: linear-gradient(90deg, #bfdaff, #e8f2ff); border-bottom: 1px solid #9ebbe5; }
.objects ul { list-style: none; margin: 0; padding: 0; color: #000; }
.objects li { height: 24px; padding-left: 11px; }
.objects li a { display: flex; align-items: center; gap: 11px; height: 22px; }
.objects .sel { background: #dedede; }

.doc { flex: 1; min-width: 0; display: flex; flex-direction: column; border-left: 1px solid #6593cf; background: #fff; }
.doctabs { height: 24px; flex: none; display: flex; align-items: flex-end; padding-left: 1px; background: #86a8d6; border-bottom: 1px solid #6593cf; color: #000; overflow: hidden; }
.doctabs a { position: relative; z-index: 1; height: 23px; display: flex; align-items: center; gap: 8px; padding-left: 5px; white-space: nowrap; }
/* a tab is a straight left part and a slanted right end */
.doctabs a::before, .doctabs a::after { content: ""; position: absolute; z-index: -1; top: 0; bottom: 0; border: 1px solid #5b86c2; border-bottom: 0; background: linear-gradient(#bad6ff, #a5caff 50%, #94bef8 52%, #a5cbff); }
.doctabs a::before { left: 0; right: 16px; border-right: 0; border-radius: 4px 0 0 0; }
.doctabs a::after { right: -5px; width: 22px; border-left: 0; border-right-color: #e2eeff; border-radius: 0 9px 0 0; transform: skewX(30deg); transform-origin: bottom; }
.doctabs .d1 { width: 119px; z-index: 4; }
.doctabs .d2 { width: 107px; z-index: 3; }
.doctabs .d3 { width: 94px; z-index: 2; }
.doctabs .d4 { width: 134px; }
.doctabs .on { width: 78px; z-index: 5; font-family: "Open Sans", sans-serif; font-weight: bold; }
.doctabs .on::before, .doctabs .on::after { background: linear-gradient(#ffd9a6, #ffc06e 50%, #ffab3f 52%, #ffd978); border-color: #a68259; }
.doctabs .x { margin: 0 8px 0 auto; height: 23px; }

/* datasheet, empty part shows the faint grid */
.sheet { flex: 1; min-height: 0; position: relative; overflow: hidden;
  background:
    linear-gradient(#f5f6fb, #f5f6fb) 0 0 / 18px 100% no-repeat,
    linear-gradient(90deg, transparent 18px, #f1f1f4 18px, #f1f1f4 19px, transparent 19px, transparent 33px, #f1f1f4 33px, #f1f1f4 34px, transparent 34px, transparent 127px, #f1f1f4 127px, #f1f1f4 128px, transparent 128px, transparent 221px, #f1f1f4 221px, #f1f1f4 222px, transparent 222px, transparent 505px, #f1f1f4 505px) 0 0 / 506px 100% no-repeat,
    repeating-linear-gradient(90deg, transparent 0, transparent 93px, #f1f1f4 93px, #f1f1f4 94px) 506px 0 / 3000px 100% no-repeat,
    repeating-linear-gradient(#fff 0, #fff 19px, #f4f4f6 19px, #f4f4f6 20px); }
.sheet table { table-layout: fixed; width: 882px; border-collapse: separate; border-spacing: 0; font-size: 13px; line-height: 18px; color: #303038; }
.c-sel { width: 19px; }
.c-exp { width: 15px; }
.c-n { width: 94px; }
.c-name { width: 284px; }
.sheet th, .sheet td { height: 20px; padding: 0 3px; border: solid #d0d7e5; border-width: 0 1px 1px 0; background: #fff; white-space: nowrap; }
.sheet th { padding: 0 6px 0 0; font-weight: normal; color: #3b4a57; background: linear-gradient(#f6fafc, #d3dde9); border-right-color: #9eb6ce; border-bottom: 0; }
.sheet th div { display: flex; align-items: center; justify-content: space-between; }
.sheet th div::before { content: ""; }
.sheet th .caret { color: #333; }
.sheet th.cur { color: #5b523f; background: linear-gradient(#f9d99f, #f1be5c); }
.sheet th.corner { background: linear-gradient(135deg, #a9c4e9 65%, #e7f0fa 66%); }
.sheet tr:nth-child(even) td { background: #f2f2f2; }
.sheet tr.active td { background: #e6e9f5; color: #000; }
.sheet tr td.rs { background: #e4ecf7; padding: 0 4px 0 5px; }
.sheet tr.active td.rs { background: #ffd58d; }
.sheet tr td.ex { background: #fff; }
.plus { width: 9px; height: 9px; }
.mid { text-align: center; }
.num { text-align: right; }
.sheet tr.active td.edit { padding: 0; background: #fff; border: 1px solid #fbb860; }
.edit div { display: flex; align-items: center; }
.edit input { width: 15px; height: 17px; margin: 0 auto; padding: 0; border: 0; background: #000; color: #fff; font: inherit; text-align: center; }
.edit button { width: 17px; height: 17px; color: #000; background: linear-gradient(#f6f6f6, #cfcfcf); border: 1px solid #707070; }
.frame { position: absolute; left: 12px; top: 11px; width: 31px; height: 136px; border: 5px solid #ed1c24; }

.recnav { height: 20px; flex: none; display: flex; align-items: center; gap: 8px; padding-left: 5px; border: solid #6593cf; border-width: 1px 0; background: linear-gradient(#e5f0ff 50%, #d3e4fc 50%); }
.recnav input { height: 16px; padding: 0 1px; border: 1px solid #abc1de; background: #eaf2fb; font: inherit; color: #000; }
.recno { width: 50px; }
.find { width: 70px; }
.nofilter { display: flex; align-items: center; gap: 4px; height: 18px; padding: 0 9px; border: solid #6593cf; border-width: 0 1px; color: #9a9a9a; white-space: nowrap; margin-right: -3px; }

/* status bar and taskbar */
.status { height: 21px; flex: none; display: flex; align-items: center; padding-left: 8px; background: linear-gradient(#e3efff, #d0e1f8 30%, #b5d0f2 32%, #d9e8fa); }
.status .mode { flex: 1; }
.status .pane { flex: 0 0 44%; height: 18px; border-left: 1px solid #7ba3d8; box-shadow: inset 1px 0 #f0f6ff; }
.views { display: flex; height: 100%; padding: 1px 0 1px 5px; background: #8eb2e2; border-left: 1px solid #6593cf; }
.views button { width: 19px; border: 1px solid #a9c6ec; background: linear-gradient(#d7e6fa, #b3cdf0); }
.views .on { background: linear-gradient(#fee8ba, #fdc163); }
.taskbar { height: 40px; flex: none; display: flex; align-items: center; padding-left: 8px; background: linear-gradient(#6e7579 0, #1b2025 3px, #05090d 6px, #05090d); color: #fff; }
.taskbar > a { width: 62px; height: 38px; display: flex; align-items: center; justify-content: center; }
.start + a { margin-left: 12px; }
.taskbar .running { width: 58px; margin-left: 2px; border: 1px solid #aaa; border-radius: 2px; background: linear-gradient(120deg, #9d9fa0, #66696b 50%, #4b4e50 51%, #808284); }
.tray { display: flex; align-items: center; height: 100%; margin-left: auto; }
.up { margin-left: 16px; }
.net { margin-left: 12px; }
.vol { margin: 0 6px 0 8px; }
.clock { width: 78px; text-align: center; line-height: 17px; }
.desk { width: 14px; height: 38px; border: 1px solid #666; background: linear-gradient(#555, #111 40%); }
```
